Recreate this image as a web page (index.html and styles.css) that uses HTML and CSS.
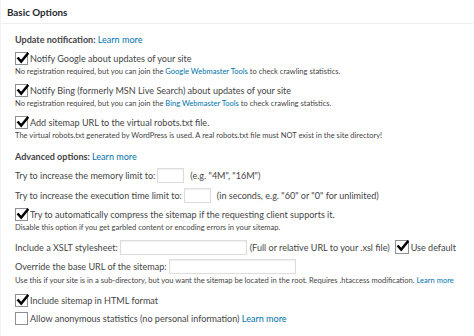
FILE: index.html
```html
<!DOCTYPE html>
<html lang="en">

<head>
    <meta charset="UTF-8">
    <meta name="viewport" content="width=device-width, initial-scale=1.0">
    <title>Basic Options</title>
    <link rel="stylesheet" href="styles.css">
</head>

<body>
    <div class="postbox">
        <h2 class="hndle">Basic Options</h2>
        <div class="inside">
            <!-- update notification -->
            <div class="group-title">Update notification: <a href="#">Learn more</a></div>
            <div class="opt">
                <div class="check-row"><span class="cb checked"><svg viewBox="0 0 13 13"><path d="M2.3 6.4 L5.2 9.6 L11.6 1.8"/></svg></span>Notify Google about updates of your site</div>
                <div class="desc">No registration required, but you can join the <a href="#">Google Webmaster Tools</a> to check crawling statistics.</div>
            </div>
            <div class="opt">
                <div class="check-row"><span class="cb checked"><svg viewBox="0 0 13 13"><path d="M2.3 6.4 L5.2 9.6 L11.6 1.8"/></svg></span>Notify Bing (formerly MSN Live Search) about updates of your site</div>
                <div class="desc">No registration required, but you can join the <a href="#">Bing Webmaster Tools</a> to check crawling statistics.</div>
            </div>
            <div class="opt">
                <div class="check-row"><span class="cb checked"><svg viewBox="0 0 13 13"><path d="M2.3 6.4 L5.2 9.6 L11.6 1.8"/></svg></span>Add sitemap URL to the virtual robots.txt file.</div>
                <div class="desc">The virtual robots.txt generated by WordPress is used. A real robots.txt file must NOT exist in the site directory!</div>
            </div>

            <!-- advanced options -->
            <div class="group-title adv">Advanced options: <a href="#">Learn more</a></div>
            <div class="field-row">Try to increase the memory limit to:<span class="text-input small"></span>(e.g. "4M", "16M")</div>
            <div class="field-row">Try to increase the execution time limit to:<span class="text-input small"></span>(in seconds, e.g. "60" or "0" for unlimited)</div>
            <div class="opt compress">
                <div class="check-row"><span class="cb checked"><svg viewBox="0 0 13 13"><path d="M2.3 6.4 L5.2 9.6 L11.6 1.8"/></svg></span>Try to automatically compress the sitemap if the requesting client supports it.</div>
                <div class="desc">Disable this option if you get garbled content or encoding errors in your sitemap.</div>
            </div>
            <div class="field-row">Include a XSLT stylesheet:<span class="text-input wide"></span>(Full or relative URL to your .xsl file)<span class="cb checked big"><svg viewBox="0 0 13 13"><path d="M2.3 6.4 L5.2 9.6 L11.6 1.8"/></svg></span>Use default</div>
            <div class="opt">
                <div class="field-row short">Override the base URL of the sitemap:<span class="text-input wide"></span></div>
                <div class="desc">Use this if your site is in a sub-directory, but you want the sitemap be located in the root. Requires .htaccess modification. <a href="#">Learn more</a></div>
            </div>
            <div class="check-row html-row"><span class="cb checked"><svg viewBox="0 0 13 13"><path d="M2.3 6.4 L5.2 9.6 L11.6 1.8"/></svg></span>Include sitemap in HTML format</div>
            <div class="check-row"><span class="cb"></span>Allow anonymous statistics (no personal information)&nbsp;<a href="#">Learn more</a></div>
        </div>
    </div>
</body>

</html>
```

FILE: styles.css
```css
body {
    margin: 0;
    padding: 0;
    font-family: Lato, "Open Sans", sans-serif;
    background: #fff;
    color: #444;
    overflow: hidden;
}

a {
    color: #0073aa;
    text-decoration: none;
}

.postbox {
    width: 473px;
    height: 336px;
    border-left: 1px solid #f1f1f1;
    box-sizing: border-box;
}

.hndle {
    margin: 0;
    height: 24px;
    padding: 0 0 0 6px;
    font-size: 9.8px;
    font-weight: 700;
    line-height: 25px;
    color: #23282d;
    border-bottom: 1px solid #eee;
    box-sizing: border-box;
}

.inside {
    padding: 9px 0 0 14px;
    font-size: 9.05px;
    white-space: nowrap;
}

.group-title {
    font-weight: 700;
    line-height: 14px;
    margin-bottom: 4px;
}

.group-title a {
    font-weight: 400;
}

.group-title.adv {
    margin-top: 8px;
    margin-bottom: 1px;
}

.opt {
    margin-bottom: 5px;
}

.opt.compress {
    margin-top: 2px;
    margin-bottom: 3px;
}

.check-row {
    display: flex;
    align-items: center;
    line-height: 14px;
    height: 15px;
}

.cb {
    flex: none;
    width: 11px;
    height: 11px;
    border: 1px solid #8c8f94;
    background: #fff;
    margin-right: 2px;
    position: relative;
}

.cb svg {
    position: absolute;
    left: 0;
    top: -1px;
    width: 13px;
    height: 13px;
    fill: none;
    stroke: #000;
    stroke-width: 2.4;
    stroke-linecap: square;
}

.cb.big {
    width: 12px;
    height: 12px;
    margin-left: 5px;
    margin-right: 2px;
}

.desc {
    font-size: 7.55px;
    line-height: 12px;
    color: #444;
}

.field-row {
    display: flex;
    align-items: center;
    height: 20px;
}

.field-row.short {
    height: 18px;
}

.text-input {
    flex: none;
    height: 15px;
    border: 1px solid #ddd;
    box-shadow: inset 0 1px 2px rgba(0, 0, 0, 0.07);
    box-sizing: border-box;
    background: #fff;
    margin: 0 3px 0 2px;
}

.text-input.small {
    width: 27px;
    margin-right: 6px;
}

.text-input.wide {
    width: 127px;
}

.html-row {
    margin-top: 6px;
    margin-bottom: 3px;
}
```
